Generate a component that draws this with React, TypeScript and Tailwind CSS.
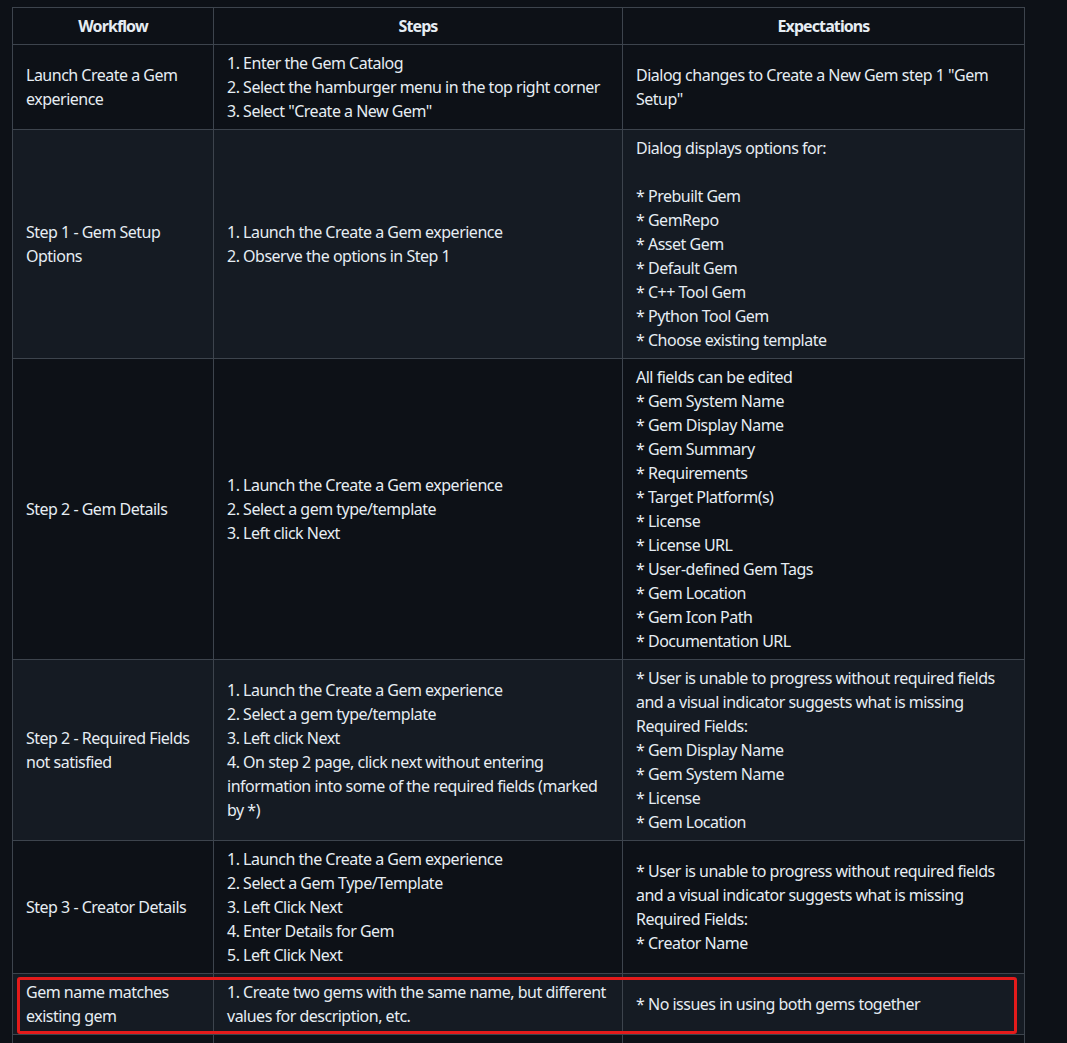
import React from "react";

type Row = { wf: string[]; steps: string[]; exp: string[] };

const rows: Row[] = [
  {
    wf: ["Launch Create a Gem experience"],
    steps: [
      "1. Enter the Gem Catalog",
      "2. Select the hamburger menu in the top right corner",
      '3. Select "Create a New Gem"',
    ],
    exp: ['Dialog changes to Create a New Gem step 1 "Gem Setup"'],
  },
  {
    wf: ["Step 1 - Gem Setup Options"],
    steps: ["1. Launch the Create a Gem experience", "2. Observe the options in Step 1"],
    exp: [
      "Dialog displays options for:",
      "",
      "* Prebuilt Gem",
      "* GemRepo",
      "* Asset Gem",
      "* Default Gem",
      "* C++ Tool Gem",
      "* Python Tool Gem",
      "* Choose existing template",
    ],
  },
  {
    wf: ["Step 2 - Gem Details"],
    steps: [
      "1. Launch the Create a Gem experience",
      "2. Select a gem type/template",
      "3. Left click Next",
    ],
    exp: [
      "All fields can be edited",
      "* Gem System Name",
      "* Gem Display Name",
      "* Gem Summary",
      "* Requirements",
      "* Target Platform(s)",
      "* License",
      "* License URL",
      "* User-defined Gem Tags",
      "* Gem Location",
      "* Gem Icon Path",
      "* Documentation URL",
    ],
  },
  {
    wf: ["Step 2 - Required Fields not satisfied"],
    steps: [
      "1. Launch the Create a Gem experience",
      "2. Select a gem type/template",
      "3. Left click Next",
      "4. On step 2 page, click next without entering information into some of the required fields (marked by *)",
    ],
    exp: [
      "* User is unable to progress without required fields and a visual indicator suggests what is missing",
      "Required Fields:",
      "* Gem Display Name",
      "* Gem System Name",
      "* License",
      "* Gem Location",
    ],
  },
  {
    wf: ["Step 3 - Creator Details"],
    steps: [
      "1. Launch the Create a Gem experience",
      "2. Select a Gem Type/Template",
      "3. Left Click Next",
      "4. Enter Details for Gem",
      "5. Left Click Next",
    ],
    exp: [
      "* User is unable to progress without required fields and a visual indicator suggests what is missing",
      "Required Fields:",
      "* Creator Name",
    ],
  },
  {
    wf: ["Gem name matches existing gem"],
    steps: ["1. Create two gems with the same name, but different values for description, etc."],
    exp: ["* No issues in using both gems together"],
  },
];

function Lines({ lines }: { lines: string[] }) {
  return (
    <>
      {lines.map((l, i) => (
        <React.Fragment key={i}>
          {i > 0 && <br />}
          {l}
        </React.Fragment>
      ))}
    </>
  );
}

const td = "border border-[#3d444d] px-[13px] py-[6px] align-middle";

export default function App() {
  return (
    <div className="min-h-screen bg-[#0d1117] pl-[12px] pt-[7px] text-[16px] leading-[24px] tracking-[-0.5px] text-[#e6edf3] [font-family:'Noto_Sans',sans-serif]">
      <div className="relative w-[1012px]">
        <table className="w-[1012px] table-fixed border-collapse">
          <colgroup>
            <col className="w-[201px]" />
            <col className="w-[409px]" />
            <col className="w-[402px]" />
          </colgroup>
          <thead>
            <tr className="bg-[#0d1117]">
              <th className={`${td} text-center font-bold tracking-[-0.9px]`}>Workflow</th>
              <th className={`${td} text-center font-bold tracking-[-0.9px]`}>Steps</th>
              <th className={`${td} text-center font-bold tracking-[-0.9px]`}>Expectations</th>
            </tr>
          </thead>
          <tbody>
            {rows.map((r, i) => (
              <tr key={i} className={i % 2 === 1 ? "bg-[#151b23]" : "bg-[#0d1117]"}>
                <td className={td}>
                  <Lines lines={r.wf} />
                </td>
                <td className={td}>
                  <Lines lines={r.steps} />
                </td>
                <td className={td}>
                  <Lines lines={r.exp} />
                </td>
              </tr>
            ))}
            <tr className="bg-[#0d1117]">
              <td className={`${td} h-[60px]`}></td>
              <td className={td}></td>
              <td className={td}></td>
            </tr>
          </tbody>
        </table>
        <div className="pointer-events-none absolute left-[5px] top-[970px] h-[57px] w-[1000px] rounded-[3px] border-[3px] border-[#e31b1b]" />
      </div>
    </div>
  );
}
